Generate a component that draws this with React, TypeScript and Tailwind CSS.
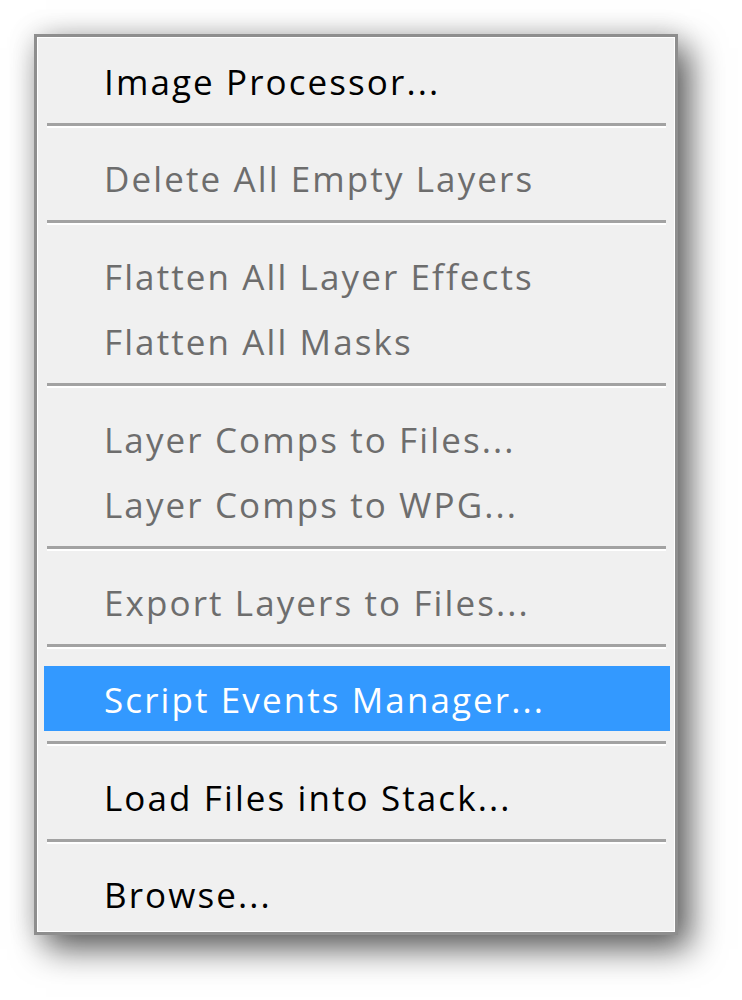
type Item =
  | { kind: "item"; label: string; disabled?: boolean; active?: boolean }
  | { kind: "sep" };

const items: Item[] = [
  { kind: "item", label: "Image Processor..." },
  { kind: "sep" },
  { kind: "item", label: "Delete All Empty Layers", disabled: true },
  { kind: "sep" },
  { kind: "item", label: "Flatten All Layer Effects", disabled: true },
  { kind: "item", label: "Flatten All Masks", disabled: true },
  { kind: "sep" },
  { kind: "item", label: "Layer Comps to Files...", disabled: true },
  { kind: "item", label: "Layer Comps to WPG...", disabled: true },
  { kind: "sep" },
  { kind: "item", label: "Export Layers to Files...", disabled: true },
  { kind: "sep" },
  { kind: "item", label: "Script Events Manager...", active: true },
  { kind: "sep" },
  { kind: "item", label: "Load Files into Stack..." },
  { kind: "sep" },
  { kind: "item", label: "Browse..." },
];

function MenuRow({ label, disabled, active }: { label: string; disabled?: boolean; active?: boolean }) {
  const color = active ? "bg-[#3399ff] text-white" : disabled ? "text-[#6d6d6d]" : "text-black";
  return (
    <div className={`flex h-[65.5px] items-center pl-[60px] pt-[3px] ${color}`}>
      <span className="whitespace-nowrap">{label}</span>
    </div>
  );
}

export default function App() {
  return (
    <div className="min-h-screen bg-white pl-[34px] pt-[34px]">
      <div className="w-[644px] border-[3px] border-[#8e8e8e] shadow-[12px_14px_32px_rgba(0,0,0,0.62),0_0_26px_rgba(0,0,0,0.14)]">
        <div
          className="border border-white bg-[#f0f0f0] pb-[5px] pl-[6px] pr-[4px] pt-[9px] text-[35px] font-medium leading-none tracking-[2.1px]"
          style={{ fontFamily: '"Open Sans", "Noto Sans", sans-serif' }}
        >
          {items.map((it, i) =>
            it.kind === "sep" ? (
              <div key={i} className="pb-[17px] pl-[3px] pr-[4px] pt-[10px]">
                <div className="border-t-[3px] border-b-2 border-t-[#a2a2a2] border-b-white" />
              </div>
            ) : (
              <MenuRow key={i} label={it.label} disabled={it.disabled} active={it.active} />
            )
          )}
        </div>
      </div>
    </div>
  );
}
